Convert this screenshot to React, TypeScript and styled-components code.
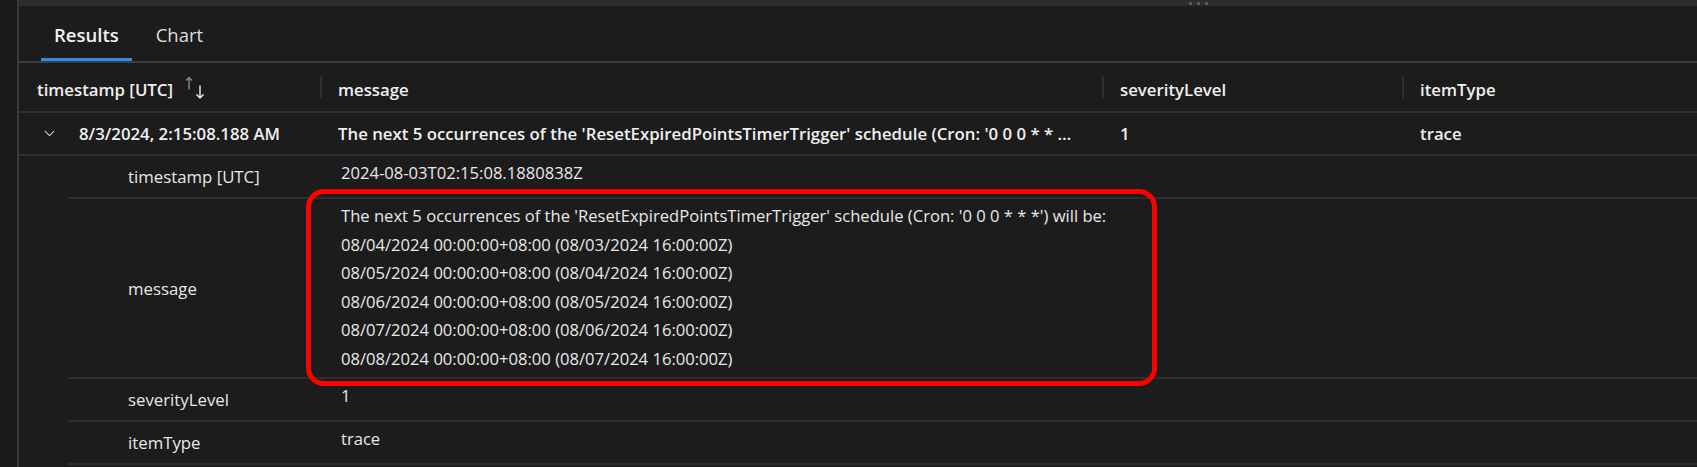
import React from "react";
import styled, { createGlobalStyle } from "styled-components";
import { ChevronDown } from "lucide-react";

const GlobalStyle = createGlobalStyle`
  html, body {
    margin: 0;
    padding: 0;
    background: #1c1c1c;
  }
  body {
    font-family: "Open Sans", "Noto Sans", sans-serif;
    color: #e4e4e4;
  }
`;

const messageLines = [
  "The next 5 occurrences of the 'ResetExpiredPointsTimerTrigger' schedule (Cron: '0 0 0 * * *') will be:",
  "08/04/2024 00:00:00+08:00 (08/03/2024 16:00:00Z)",
  "08/05/2024 00:00:00+08:00 (08/04/2024 16:00:00Z)",
  "08/06/2024 00:00:00+08:00 (08/05/2024 16:00:00Z)",
  "08/07/2024 00:00:00+08:00 (08/06/2024 16:00:00Z)",
  "08/08/2024 00:00:00+08:00 (08/07/2024 16:00:00Z)",
];

function SortIcon() {
  return (
    <svg width="22" height="24" viewBox="0 0 22 24">
      <g fill="none" strokeWidth="1.4" strokeLinecap="round" strokeLinejoin="round">
        <path d="M4 13V1.5M1.5 4L4 1.5L6.5 4" stroke="#8a8a8a" />
        <path d="M15 10v12M11.8 18.8L15 22l3.2-3.2" stroke="#f2f2f2" />
      </g>
    </svg>
  );
}

function App() {
  return (
    <Page>
      <GlobalStyle />
      <Gutter />
      <Panel>
        <TopBar>
          <Dot />
          <Dot />
          <Dot />
        </TopBar>
        <TabStrip>
          <Tab active>Results</Tab>
          <Tab>Chart</Tab>
        </TabStrip>

        <HeaderRow>
          <HeadCell>
            timestamp [UTC]
            <SortWrap>
              <SortIcon />
            </SortWrap>
          </HeadCell>
          <HeadCell divider>message</HeadCell>
          <HeadCell divider>severityLevel</HeadCell>
          <HeadCell divider>itemType</HeadCell>
        </HeaderRow>

        <DataRow>
          <DataCell>
            <Expander>
              <ChevronDown size={17} strokeWidth={1.6} />
            </Expander>
            8/3/2024, 2:15:08.188 AM
          </DataCell>
          <DataCell truncate>{messageLines[0]}</DataCell>
          <DataCell>1</DataCell>
          <DataCell>trace</DataCell>
        </DataRow>

        <Details>
          <DetailRow>
            <DetailLabel>timestamp [UTC]</DetailLabel>
            <DetailValue>2024-08-03T02:15:08.1880838Z</DetailValue>
          </DetailRow>
          <DetailRow>
            <DetailLabel>message</DetailLabel>
            <DetailValue>
              {messageLines.map((line) => (
                <div key={line}>{line}</div>
              ))}
              <Highlight />
            </DetailValue>
          </DetailRow>
          <DetailRow>
            <DetailLabel>severityLevel</DetailLabel>
            <DetailValue>1</DetailValue>
          </DetailRow>
          <DetailRow>
            <DetailLabel>itemType</DetailLabel>
            <DetailValue>trace</DetailValue>
          </DetailRow>
        </Details>
      </Panel>
    </Page>
  );
}

export default App;

const Page = styled.div`
  display: flex;
  width: 1697px;
  height: 467px;
  overflow: hidden;
  background: #1c1c1c;
`;

const Gutter = styled.div`
  width: 17px;
  flex-shrink: 0;
  background: #1a1a1a;
  border-right: 2px solid #3a3a3a;
`;

const Panel = styled.div`
  flex: 1;
  display: flex;
  flex-direction: column;
  min-width: 0;
`;

const TopBar = styled.div`
  height: 6px;
  background: #2c2c2c;
  display: flex;
  align-items: center;
  gap: 5px;
  padding-left: 1170px;
`;

const Dot = styled.span`
  width: 3px;
  height: 3px;
  border-radius: 50%;
  background: #6a6a6a;
`;

const TabStrip = styled.div`
  height: 55px;
  display: flex;
  align-items: stretch;
  gap: 11px;
  padding-left: 22px;
  border-bottom: 2px solid #3a3e47;
`;

const Tab = styled.div<{ active?: boolean }>`
  display: flex;
  align-items: center;
  padding: 4px 13px 0;
  font-size: 18.5px;
  font-weight: ${(p) => (p.active ? 600 : 400)};
  color: ${(p) => (p.active ? "#f2f2f2" : "#dcdcdc")};
  border-bottom: 3px solid ${(p) => (p.active ? "#2e8fe0" : "transparent")};
`;

const columns = "301px 782px 300px 1fr";

const HeaderRow = styled.div`
  display: grid;
  grid-template-columns: ${columns};
  height: 48px;
  border-bottom: 2px solid #2f2f2f;
`;

const HeadCell = styled.div<{ divider?: boolean }>`
  position: relative;
  display: flex;
  align-items: center;
  padding: 4px 0 0 18px;
  font-size: 16.8px;
  font-weight: 600;
  color: #efefef;
  white-space: nowrap;

  &::before {
    content: "";
    display: ${(p) => (p.divider ? "block" : "none")};
    position: absolute;
    left: 0;
    top: 13px;
    bottom: 13px;
    width: 2px;
    background: #2e2e2e;
  }
`;

const SortWrap = styled.span`
  display: flex;
  margin-left: 12px;
  margin-top: -2px;
`;

const DataRow = styled.div`
  display: grid;
  grid-template-columns: ${columns};
  height: 41px;
  border-bottom: 2px solid #2f2f2f;
`;

const DataCell = styled.div<{ truncate?: boolean }>`
  display: flex;
  align-items: center;
  padding: 0 22px 0 18px;
  font-size: 16.8px;
  font-weight: 600;
  color: #efefef;
  white-space: nowrap;
  min-width: 0;

  ${(p) =>
    p.truncate &&
    `
    display: block;
    line-height: 41px;
    overflow: hidden;
    text-overflow: ellipsis;
  `}
`;

const Expander = styled.span`
  display: flex;
  color: #cfcfcf;
  margin: 0 21px 0 4px;
`;

const Details = styled.div`
  margin-left: 49px;
`;

const DetailRow = styled.div`
  display: grid;
  grid-template-columns: 273px 1fr;
  min-height: 41px;
  border-bottom: 2px solid #2e2e2e;
`;

const DetailLabel = styled.div`
  display: flex;
  align-items: center;
  padding-left: 60px;
  font-size: 16.8px;
  color: #e8e8e8;
`;

const DetailValue = styled.div`
  position: relative;
  padding: 3px 0 4px;
  font-size: 16.6px;
  line-height: 28.5px;
  color: #e8e8e8;
`;

const Highlight = styled.div`
  position: absolute;
  left: -35px;
  top: -10px;
  width: 841px;
  height: 187px;
  border: 5px solid #ff0000;
  border-radius: 18px;
  pointer-events: none;
`;
